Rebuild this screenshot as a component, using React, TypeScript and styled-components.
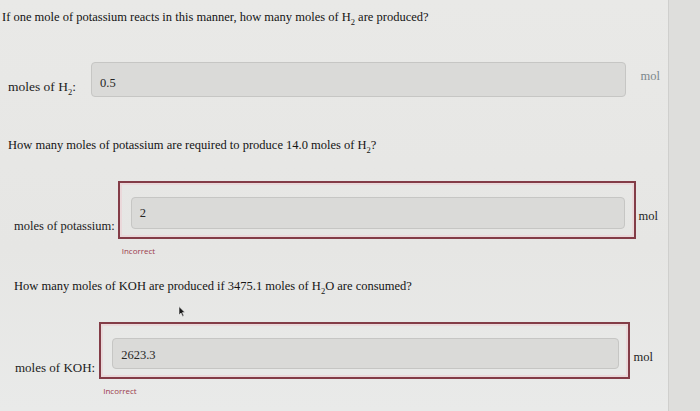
import React from 'react'
import styled, { createGlobalStyle, css } from 'styled-components'

const GlobalStyle = createGlobalStyle`
    html, body {
        margin: 0;
        padding: 0;
        background: #e7e7e5;
    }
    * {
        box-sizing: border-box;
    }
`

const SerifFont = css`
    font-family: 'Liberation Serif', 'Times New Roman', serif;
`

const Page = styled.div`
    position: relative;
    display: flex;
    width: 700px;
    height: 411px;
    overflow: hidden;
    background: linear-gradient(180deg, #e9e9e7 0%, #e6e6e4 60%, #e9eae9 100%);
`

const Main = styled.div`
    flex: 0 0 668px;
    display: flex;
    flex-direction: column;
    padding-top: 8px;
`

const SidePanel = styled.div`
    flex: 1;
    background: #dededc;
    border-left: 1px solid #cfcfcd;
`

const Question = styled.p<{ $left: number; $top: number }>`
    ${SerifFont}
    margin: ${(p) => p.$top}px 0 0 ${(p) => p.$left}px;
    font-size: 12.5px;
    line-height: 18px;
    color: #141414;

    sub {
        font-size: 8.5px;
        line-height: 0;
    }
`

const RowWrap = styled.div<{ $right: number }>`
    padding-right: ${(p) => p.$right}px;
`

const AnswerRow = styled.div<{ $left: number; $top: number; $gap: number }>`
    display: grid;
    grid-template-columns: auto 1fr auto;
    align-items: center;
    column-gap: ${(p) => p.$gap}px;
    margin-top: ${(p) => p.$top}px;
    padding-left: ${(p) => p.$left}px;
`

const Label = styled.span<{ $shift: number; $size: number }>`
    ${SerifFont}
    grid-column: 1;
    grid-row: 1;
    font-size: ${(p) => p.$size}px;
    color: #1c1c1c;
    white-space: nowrap;
    padding-top: ${(p) => Math.max(p.$shift, 0) * 2}px;
    padding-bottom: ${(p) => Math.max(-p.$shift, 0) * 2}px;

    sub {
        font-size: 8.5px;
        line-height: 0;
    }
`

const Unit = styled.span<{ $shift: number; $faded?: boolean }>`
    ${SerifFont}
    grid-column: 3;
    grid-row: 1;
    font-size: 12.5px;
    color: ${(p) => (p.$faded ? '#7b878c' : '#232323')};
    padding-top: ${(p) => Math.max(p.$shift, 0) * 2}px;
    padding-bottom: ${(p) => Math.max(-p.$shift, 0) * 2}px;
`

const FieldFrame = styled.div<{ $incorrect?: boolean }>`
    grid-column: 2;
    grid-row: 1;
    ${(p) =>
        p.$incorrect &&
        css`
            border: 2px solid #833c47;
            box-shadow: inset 0 0 0 2px #ead8da;
            padding: 14px 9px 8px 11px;
        `}
`

const ValueBox = styled.div<{ $height: number; $drop: number }>`
    ${SerifFont}
    height: ${(p) => p.$height}px;
    display: flex;
    align-items: center;
    padding: ${(p) => Math.max(p.$drop, 0) * 2}px 0
        ${(p) => Math.max(-p.$drop, 0) * 2}px 8px;
    background: #dadad8;
    border: 1px solid #c6c6c4;
    border-radius: 4px;
    font-size: 12.5px;
    color: #262626;
`

const Note = styled.span`
    grid-column: 2;
    grid-row: 2;
    margin-top: 7px;
    padding-left: 4px;
    font-family: 'Open Sans', 'Liberation Sans', Arial, sans-serif;
    font-size: 8px;
    line-height: 10px;
    color: #9b3a4c;
`

const Pointer = styled.svg`
    position: absolute;
    left: 178px;
    top: 306px;
`

type AnswerProps = {
    label: React.ReactNode
    value: string
    left: number
    top: number
    gap: number
    labelShift: number
    labelSize: number
    unitShift: number
    valueDrop: number
    height: number
    incorrect?: boolean
    faded?: boolean
}

const Answer = ({
    label,
    value,
    left,
    top,
    gap,
    labelShift,
    labelSize,
    unitShift,
    valueDrop,
    height,
    incorrect,
    faded,
}: AnswerProps) => (
    <AnswerRow $left={left} $top={top} $gap={gap}>
        <Label $shift={labelShift} $size={labelSize}>
            {label}
        </Label>
        <FieldFrame $incorrect={incorrect}>
            <ValueBox $height={height} $drop={valueDrop}>
                {value}
            </ValueBox>
        </FieldFrame>
        <Unit $shift={unitShift} $faded={faded}>
            mol
        </Unit>
        {incorrect && <Note>Incorrect</Note>}
    </AnswerRow>
)

export default function App() {
    return (
        <>
            <GlobalStyle />
            <Page>
                <Main>
                    <Question $left={2} $top={0}>
                        If one mole of potassium reacts in this manner, how many
                        moles of H<sub>2</sub> are produced?
                    </Question>
                    <RowWrap $right={8}>
                        <Answer
                            label={
                                <>
                                    moles of H<sub>2</sub>:
                                </>
                            }
                            value="0.5"
                            left={8}
                            top={36}
                            gap={15}
                            labelShift={7}
                            labelSize={13.5}
                            unitShift={-3}
                            valueDrop={4}
                            height={35}
                            faded
                        />
                    </RowWrap>
                    <Question $left={8} $top={39}>
                        How many moles of potassium are required to produce 14.0
                        moles of H<sub>2</sub>?
                    </Question>
                    <RowWrap $right={10}>
                        <Answer
                            label="moles of potassium:"
                            value="2"
                            left={14}
                            top={27}
                            gap={3}
                            labelShift={16}
                            labelSize={12.5}
                            unitShift={6}
                            valueDrop={0}
                            height={32}
                            incorrect
                        />
                    </RowWrap>
                    <Question $left={14} $top={21}>
                        How many moles of KOH are produced if 3475.1 moles of H
                        <sub>2</sub>O are consumed?
                    </Question>
                    <RowWrap $right={15}>
                        <Answer
                            label="moles of KOH:"
                            value="2623.3"
                            left={15}
                            top={27}
                            gap={4}
                            labelShift={17}
                            labelSize={13}
                            unitShift={7}
                            valueDrop={2}
                            height={31}
                            incorrect
                        />
                    </RowWrap>
                </Main>
                <SidePanel />
                <Pointer width="8" height="11" viewBox="0 0 8 11">
                    <path
                        d="M1 0.5 L1 9 L3 7 L4.6 10.4 L5.9 9.8 L4.4 6.6 L7 6.6 Z"
                        fill="#1a1a1a"
                        stroke="#f2f2f2"
                        strokeWidth="0.6"
                    />
                </Pointer>
            </Page>
        </>
    )
}
